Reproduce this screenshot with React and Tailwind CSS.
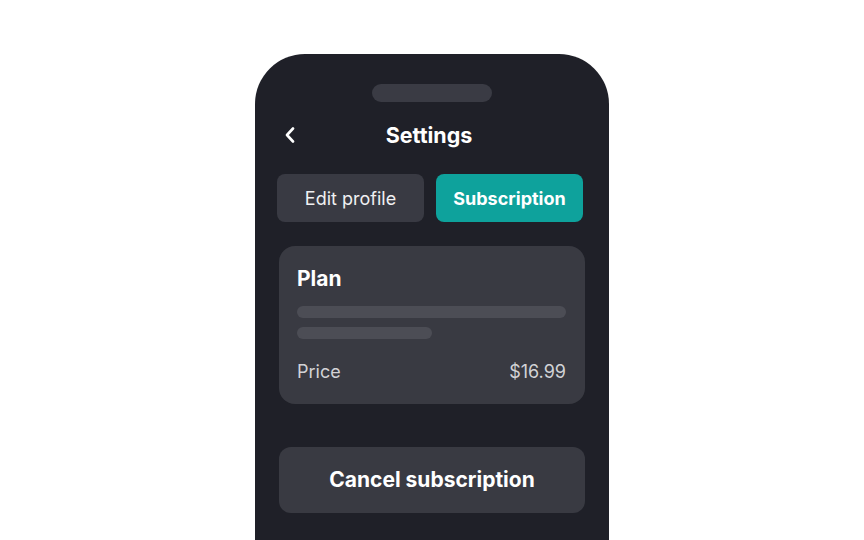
import React from "react";

const ChevronLeft = () => (
  <svg width="10" height="16" viewBox="0 0 10 16" fill="none">
    <path
      d="M8 1.5 L2 8 L8 14.5"
      stroke="white"
      strokeWidth="2.6"
      strokeLinecap="round"
      strokeLinejoin="round"
    />
  </svg>
);

export default function App() {
  return (
    <div
      className="w-[864px] h-[540px] bg-white flex justify-center overflow-hidden pt-[54px]"
      style={{ fontFamily: "Inter, 'Noto Sans', sans-serif" }}
    >
      <div className="w-[354px] h-[600px] shrink-0 rounded-t-[50px] bg-[#1f2028] flex flex-col">
        {/* notch */}
        <div className="mt-[30px] mx-auto w-[120px] h-[18px] rounded-full bg-[#3a3b44]" />

        {/* header */}
        <div className="relative mt-[19px] h-[28px] flex items-center justify-center pr-[6px]">
          <div className="absolute left-[30px] top-[6px]">
            <ChevronLeft />
          </div>
          <h1 className="text-[21.5px] font-bold text-white leading-[28px]">Settings</h1>
        </div>

        {/* tabs */}
        <div className="mt-[25px] pl-[22px] pr-[26px] grid grid-cols-2 gap-[12px]">
          <button className="h-[48px] rounded-[8px] bg-[#393a43] text-[18px] text-[#f0f0f2]">
            Edit profile
          </button>
          <button className="h-[48px] rounded-[8px] bg-[#0ea29c] text-[18px] font-bold text-white">
            Subscription
          </button>
        </div>

        {/* plan card */}
        <div className="mt-[24px] mx-[24px] rounded-[16px] bg-[#393a42] pl-[18px] pr-[19px] pt-[19px] pb-[20px]">
          <h2 className="text-[21px] font-bold text-white leading-[28px]">Plan</h2>
          <div className="mt-[13px] h-[12px] rounded-full bg-[#4c4d55]" />
          <div className="mt-[9px] h-[12px] w-[135px] rounded-full bg-[#4c4d55]" />
          <div className="mt-[21px] flex justify-between text-[18px] leading-[24px] text-[#d2d2d6]">
            <span>Price</span>
            <span>$16.99</span>
          </div>
        </div>

        {/* cancel */}
        <button className="mt-[43px] mx-[24px] h-[66px] rounded-[12px] bg-[#393a42] text-[21px] font-bold text-white">
          Cancel subscription
        </button>
      </div>
    </div>
  );
}
